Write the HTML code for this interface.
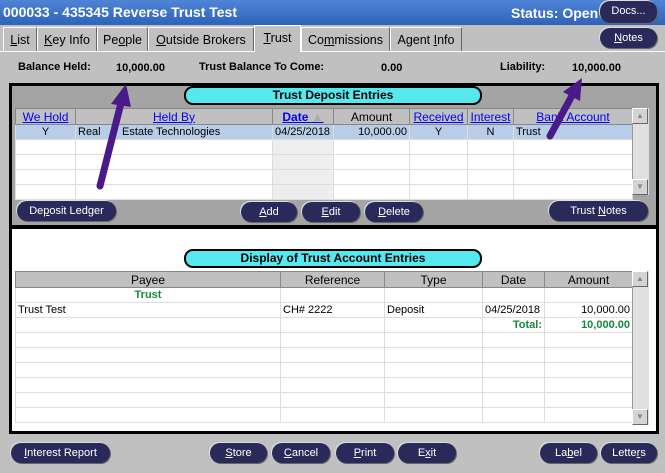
<!DOCTYPE html><html><head><style>
*{margin:0;padding:0;box-sizing:border-box}
body{width:665px;height:473px;background:#c0c0c0;font-family:"Liberation Sans",sans-serif;font-size:11px;position:relative;overflow:hidden}
.a{position:absolute}
.btn{position:absolute;background:#2a2a5a;color:#fff;border-radius:10px;text-align:center;font-size:11px;line-height:20px;height:20px;box-shadow:1px 1px 0 #666,-1px -1px 0 #ddd}
.tab{position:absolute;top:27px;height:24px;border:1px solid #fff;border-right-color:#666;border-bottom:none;line-height:24px;text-align:center;font-size:12.5px;background:#c0c0c0}
.pill{position:absolute;background:#55e8ee;border:2px solid #000;border-radius:9px;text-align:center;font-weight:bold;font-size:12px}
table{border-collapse:collapse;position:absolute;background:#fff;table-layout:fixed}
td{border:1px solid #ddd;height:15px;font-size:11px;padding:0 2px;white-space:nowrap;overflow:hidden}
th{background:#c0c0c0;border:1px solid #888;font-weight:normal;font-size:12px;height:16px;color:#000}
th.l{color:#00f;text-decoration:underline}
.sb{position:absolute;background:#e0e0e0;border-left:1px solid #999}
.sbb{position:absolute;width:16px;height:16px;background:#d4d4d4;border:1px solid #fff;border-right-color:#666;border-bottom-color:#666;font-size:8px;color:#888;text-align:center;line-height:14px}
</style></head><body>
<div class="a" style="left:0;top:0;width:665px;height:25px;background:linear-gradient(#4f84d6,#2e63b8);"></div>
<div class="a" style="left:3px;top:4px;color:#fff;font-weight:bold;font-size:14px">000033 - 435345 Reverse Trust Test</div>
<div class="a" style="left:511px;top:5px;color:#fff;font-weight:bold;font-size:14px">Status: Open</div>
<div class="btn" style="left:600px;top:1px;width:57px;height:22px;line-height:20px">Docs...</div>
<div class="tab" style="left:3px;width:34px"><u>L</u>ist</div>
<div class="tab" style="left:37px;width:60px"><u>K</u>ey Info</div>
<div class="tab" style="left:97px;width:51px">Pe<u>o</u>ple</div>
<div class="tab" style="left:148px;width:106px"><u>O</u>utside Brokers</div>
<div class="tab" style="left:254px;width:47px;top:25px;height:27px;border-color:#fff;z-index:2;background:#c0c0c0"><u>T</u>rust</div>
<div class="tab" style="left:301px;width:89px">Co<u>m</u>missions</div>
<div class="tab" style="left:390px;width:72px">Agent <u>I</u>nfo</div>
<div class="a" style="left:0;top:51px;width:665px;height:1px;background:#fff"></div>
<div class="btn" style="left:600px;top:28px;width:57px"><u>N</u>otes</div>
<div class="a" style="left:18px;top:61px;font-weight:bold">Balance Held:</div>
<div class="a" style="left:116px;top:62px;font-weight:bold">10,000.00</div>
<div class="a" style="left:199px;top:61px;font-weight:bold">Trust Balance To Come:</div>
<div class="a" style="left:381px;top:62px;font-weight:bold">0.00</div>
<div class="a" style="left:500px;top:61px;font-weight:bold">Liability:</div>
<div class="a" style="left:572px;top:62px;font-weight:bold">10,000.00</div>

<div class="a" style="left:9px;top:83px;width:650px;height:145px;background:#a4a4a4;border:3px solid #000"></div>
<div class="pill" style="left:184px;top:86px;width:298px;height:19px;line-height:15px">Trust Deposit Entries</div>
<table style="left:15px;top:108px;width:617px">
<colgroup><col style="width:60px"><col style="width:197px"><col style="width:61px"><col style="width:76px"><col style="width:58px"><col style="width:46px"><col style="width:119px"></colgroup>
<tr><th class="l">We Hold</th><th class="l">Held By</th><th class="l" style="font-weight:bold">Date <span style="color:#aaa;text-decoration:none">▲</span></th><th>Amount</th><th class="l">Received</th><th class="l">Interest</th><th class="l">Bank Account</th></tr>
<tr style="background:#b9cde8"><td style="text-align:center">Y</td><td>Real &nbsp; &nbsp; &nbsp; Estate Technologies</td><td>04/25/2018</td><td style="text-align:right">10,000.00</td><td style="text-align:center">Y</td><td style="text-align:center">N</td><td>Trust</td></tr>
<tr><td></td><td></td><td style="background:#eee"></td><td></td><td></td><td></td><td></td></tr>
<tr><td></td><td></td><td style="background:#eee"></td><td></td><td></td><td></td><td></td></tr>
<tr><td></td><td></td><td style="background:#eee"></td><td></td><td></td><td></td><td></td></tr>
<tr><td style="height:10px"></td><td></td><td style="background:#eee"></td><td></td><td></td><td></td><td></td></tr>
</table>
<div class="sb" style="left:632px;top:108px;width:17px;height:87px"></div>
<div class="sbb" style="left:632px;top:108px">▲</div>
<div class="sbb" style="left:632px;top:179px">▼</div>
<div class="btn" style="left:17px;top:201px;width:99px">De<u>p</u>osit Ledger</div>
<div class="btn" style="left:241px;top:202px;width:56px"><u>A</u>dd</div>
<div class="btn" style="left:302px;top:202px;width:58px"><u>E</u>dit</div>
<div class="btn" style="left:365px;top:202px;width:58px"><u>D</u>elete</div>
<div class="btn" style="left:549px;top:201px;width:99px">Trust <u>N</u>otes</div>

<div class="a" style="left:9px;top:226px;width:650px;height:208px;background:#fff;border:3px solid #000"></div>
<div class="pill" style="left:184px;top:249px;width:298px;height:19px;line-height:15px">Display of Trust Account Entries</div>
<table style="left:15px;top:271px;width:617px">
<colgroup><col style="width:265px"><col style="width:104px"><col style="width:98px"><col style="width:62px"><col style="width:88px"></colgroup>
<tr><th>Payee</th><th>Reference</th><th>Type</th><th>Date</th><th>Amount</th></tr>
<tr><td style="text-align:center;color:#178a3a;font-weight:bold">Trust</td><td></td><td></td><td></td><td></td></tr>
<tr><td>Trust Test</td><td>CH# 2222</td><td>Deposit</td><td>04/25/2018</td><td style="text-align:right">10,000.00</td></tr>
<tr><td></td><td></td><td></td><td style="text-align:right;color:#178a3a;font-weight:bold">Total:</td><td style="text-align:right;color:#178a3a;font-weight:bold">10,000.00</td></tr>
<tr><td></td><td></td><td></td><td></td><td></td></tr><tr><td></td><td></td><td></td><td></td><td></td></tr><tr><td></td><td></td><td></td><td></td><td></td></tr><tr><td></td><td></td><td></td><td></td><td></td></tr><tr><td></td><td></td><td></td><td></td><td></td></tr><tr><td></td><td></td><td></td><td></td><td></td></tr>
</table>
<div class="sb" style="left:632px;top:271px;width:17px;height:154px"></div>
<div class="sbb" style="left:632px;top:271px">▲</div>
<div class="sbb" style="left:632px;top:409px">▼</div>

<div class="btn" style="left:11px;top:443px;width:99px"><u>I</u>nterest Report</div>
<div class="btn" style="left:210px;top:443px;width:57px"><u>S</u>tore</div>
<div class="btn" style="left:272px;top:443px;width:58px"><u>C</u>ancel</div>
<div class="btn" style="left:336px;top:443px;width:58px"><u>P</u>rint</div>
<div class="btn" style="left:398px;top:443px;width:58px">E<u>x</u>it</div>
<div class="btn" style="left:540px;top:443px;width:57px">La<u>b</u>el</div>
<div class="btn" style="left:601px;top:443px;width:56px">Lette<u>r</u>s</div>

<svg class="a" style="left:0;top:0" width="665" height="473">
<g stroke="#4a1a88" stroke-width="7" stroke-linecap="round" fill="#4a1a88">
<line x1="100" y1="186" x2="121" y2="103"/>
<line x1="550" y1="136" x2="574" y2="92"/>
</g>
<polygon points="126,84 111,104 131,107" fill="#4a1a88"/>
<polygon points="582,78 563,92 580,101" fill="#4a1a88"/>
</svg>
</body></html>
